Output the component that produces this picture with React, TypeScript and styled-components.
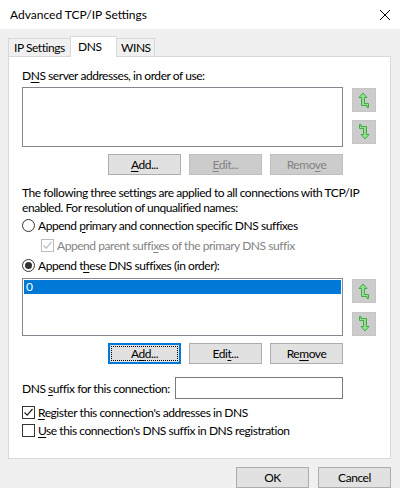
import React from "react";
import styled, { createGlobalStyle, css } from "styled-components";

const GlobalStyle = createGlobalStyle`
  html, body {
    margin: 0;
    padding: 0;
    background: #f0f0f0;
  }
  body {
    font-family: Lato, "Noto Sans", sans-serif;
    font-size: 12px;
    color: #000;
  }
`;

const Window = styled.div`
  width: 400px;
  height: 488px;
  display: flex;
  flex-direction: column;
  background: #f0f0f0;
  overflow: hidden;
`;

const TitleBar = styled.div`
  height: 31px;
  background: #fff;
  display: flex;
  align-items: center;
  justify-content: space-between;
  padding: 0 9px 0 10px;
  font-size: 12px;
`;

const CloseIcon = styled.svg`
  width: 12px;
  height: 12px;
`;

const Body = styled.div`
  padding: 7px 9px 0 8px;
  display: flex;
  flex-direction: column;
  letter-spacing: -0.45px;
`;

const TabStrip = styled.div`
  display: flex;
  align-items: flex-end;
  height: 20px;
  position: relative;
  z-index: 1;
`;

const Tab = styled.div<{ $w: number; $active?: boolean }>`
  width: ${(p) => p.$w}px;
  box-sizing: border-box;
  height: 18px;
  padding: 0 5px;
  display: flex;
  align-items: center;
  white-space: nowrap;
  border: 1px solid #d9d9d9;
  border-bottom: none;
  background: #f0f0f0;
  margin-right: -1px;
  ${(p) =>
    p.$active &&
    css`
      height: 21px;
      background: #fff;
      padding: 0 6px 2px 7px;
      margin-bottom: -1px;
      margin-left: -1px;
      margin-right: -2px;
      position: relative;
      z-index: 2;
    `}
`;

const Panel = styled.div`
  height: 390px;
  background: #fff;
  border: 1px solid #d9d9d9;
  padding: 11px 12px 0 13px;
  display: flex;
  flex-direction: column;
`;

const Label = styled.div`
  line-height: 15px;
  white-space: nowrap;
`;

const ListRow = styled.div`
  display: flex;
  gap: 9px;
  margin-top: 4px;
`;

const ListBox = styled.div<{ $h: number }>`
  width: 321px;
  height: ${(p) => p.$h}px;
  border: 1px solid #828790;
  background: #fff;
  box-sizing: border-box;
  padding: 1px;
`;

const SelectedItem = styled.div`
  height: 14px;
  line-height: 14px;
  background: #0078d7;
  color: #fff;
  padding-left: 2px;
`;

const ArrowCol = styled.div`
  display: flex;
  flex-direction: column;
  gap: 8px;
  padding-top: 1px;
`;

const ArrowButton = styled.div`
  width: 24px;
  height: 24px;
  background: #cccccc;
  border: 1px solid #c6c6c6;
  box-sizing: border-box;
  display: flex;
  align-items: center;
  justify-content: center;
`;

const ButtonRow = styled.div`
  display: flex;
  justify-content: flex-end;
  gap: 8px;
  width: 321px;
  margin-top: 7px;
`;

const Button = styled.div<{ $disabled?: boolean; $default?: boolean }>`
  width: 73px;
  height: 21px;
  box-sizing: border-box;
  border: 1px solid #adadad;
  background: #e1e1e1;
  display: flex;
  align-items: center;
  justify-content: center;
  ${(p) =>
    p.$disabled &&
    css`
      background: #cccccc;
      border-color: #bfbfbf;
      color: #838383;
    `}
  ${(p) =>
    p.$default &&
    css`
      border: 2px solid #0078d7;
      position: relative;
      &::after {
        content: "";
        position: absolute;
        inset: 1px;
        border: 1px dotted #000;
      }
    `}
`;

const Paragraph = styled.div`
  line-height: 15px;
  margin-top: 10px;
`;

const OptionRow = styled.div<{ $indent?: boolean; $disabled?: boolean }>`
  display: flex;
  align-items: center;
  height: 20px;
  white-space: nowrap;
  padding-left: ${(p) => (p.$indent ? "19px" : "0")};
  color: ${(p) => (p.$disabled ? "#838383" : "#000")};
`;

const Radio = styled.span<{ $on?: boolean }>`
  width: 13px;
  height: 13px;
  border-radius: 50%;
  border: 1px solid #333;
  box-sizing: border-box;
  margin-right: 3px;
  display: flex;
  align-items: center;
  justify-content: center;
  &::after {
    content: "";
    width: 7px;
    height: 7px;
    border-radius: 50%;
    background: ${(p) => (p.$on ? "#333" : "transparent")};
  }
`;

const Check = styled.span<{ $disabled?: boolean }>`
  width: 13px;
  height: 13px;
  border: 1px solid ${(p) => (p.$disabled ? "#bcbcbc" : "#333")};
  box-sizing: border-box;
  margin-right: 3px;
  display: flex;
  align-items: center;
  justify-content: center;
  background: #fff;
`;

const SuffixRow = styled.div`
  display: flex;
  align-items: center;
  gap: 5px;
  width: 321px;
  margin-top: 13px;
  white-space: nowrap;
`;

const TextInput = styled.div`
  flex: 1;
  height: 22px;
  border: 1px solid #7a7a7a;
  box-sizing: border-box;
  background: #fff;
`;

const Footer = styled.div`
  display: flex;
  justify-content: flex-end;
  gap: 9px;
  margin-top: 8px;
`;

const U = styled.span`
  text-decoration: underline;
  text-underline-offset: 2px;
`;

const CheckMark = ({ color }: { color: string }) => (
  <svg width="11" height="11" viewBox="0 0 11 11">
    <path d="M1.5 5.5 L4.2 8.2 L9.5 2" fill="none" stroke={color} strokeWidth="1.2" />
  </svg>
);

const MoveArrow = ({ down }: { down?: boolean }) => (
  <svg
    width="12"
    height="16"
    viewBox="0 0 12 16"
    style={down ? { transform: "rotate(180deg)" } : undefined}
  >
    <path
      d="M5 1 L1 5.5 H3.5 V13.5 H9 V15.5 H10.5 V11.5 H6.5 V5.5 H9 Z"
      fill="#8fe08f"
      stroke="#3aa63a"
      strokeWidth="0.9"
      strokeLinejoin="round"
    />
  </svg>
);

export default function App() {
  return (
    <Window>
      <GlobalStyle />
      <TitleBar>
        <span>Advanced TCP/IP Settings</span>
        <CloseIcon viewBox="0 0 12 12">
          <path d="M1 1 L11 11 M11 1 L1 11" stroke="#000" strokeWidth="1" />
        </CloseIcon>
      </TitleBar>
      <Body>
        <TabStrip>
          <Tab $w={64}>IP Settings</Tab>
          <Tab $w={47} $active>DNS</Tab>
          <Tab $w={40}>WINS</Tab>
        </TabStrip>
        <Panel>
          <Label>
            D<U>N</U>S server addresses, in order of use:
          </Label>
          <ListRow>
            <ListBox $h={60} />
            <ArrowCol>
              <ArrowButton>
                <MoveArrow />
              </ArrowButton>
              <ArrowButton>
                <MoveArrow down />
              </ArrowButton>
            </ArrowCol>
          </ListRow>
          <ButtonRow>
            <Button>
              <span>
                <U>A</U>dd...
              </span>
            </Button>
            <Button $disabled>
              <span>
                <U>E</U>dit...
              </span>
            </Button>
            <Button $disabled>
              <span>
                Remo<U>v</U>e
              </span>
            </Button>
          </ButtonRow>
          <Paragraph>
            The following three settings are applied to all connections with TCP/IP
            enabled. For resolution of unqualified names:
          </Paragraph>
          <OptionRow>
            <Radio />
            <span>
              Append <U>p</U>rimary and connection specific DNS suffixes
            </span>
          </OptionRow>
          <OptionRow $indent $disabled>
            <Check $disabled>
              <CheckMark color="#bcbcbc" />
            </Check>
            <span>
              Append parent suffi<U>x</U>es of the primary DNS suffix
            </span>
          </OptionRow>
          <OptionRow>
            <Radio $on />
            <span>
              Append t<U>h</U>ese DNS suffixes (in order):
            </span>
          </OptionRow>
          <ListRow style={{ marginTop: 3 }}>
            <ListBox $h={58}>
              <SelectedItem>0</SelectedItem>
            </ListBox>
            <ArrowCol>
              <ArrowButton>
                <MoveArrow />
              </ArrowButton>
              <ArrowButton style={{ marginTop: 1 }}>
                <MoveArrow down />
              </ArrowButton>
            </ArrowCol>
          </ListRow>
          <ButtonRow>
            <Button $default>
              <span>
                A<U>d</U>d...
              </span>
            </Button>
            <Button>
              <span>
                Edi<U>t</U>...
              </span>
            </Button>
            <Button>
              <span>
                Re<U>m</U>ove
              </span>
            </Button>
          </ButtonRow>
          <SuffixRow>
            <span>
              DNS <U>s</U>uffix for this connection:
            </span>
            <TextInput />
          </SuffixRow>
          <OptionRow style={{ marginTop: 4, height: 18 }}>
            <Check>
              <CheckMark color="#222" />
            </Check>
            <span>
              <U>R</U>egister this connection's addresses in DNS
            </span>
          </OptionRow>
          <OptionRow style={{ height: 18 }}>
            <Check />
            <span>
              <U>U</U>se this connection's DNS suffix in DNS registration
            </span>
          </OptionRow>
        </Panel>
        <Footer>
          <Button>OK</Button>
          <Button>Cancel</Button>
        </Footer>
      </Body>
    </Window>
  );
}
